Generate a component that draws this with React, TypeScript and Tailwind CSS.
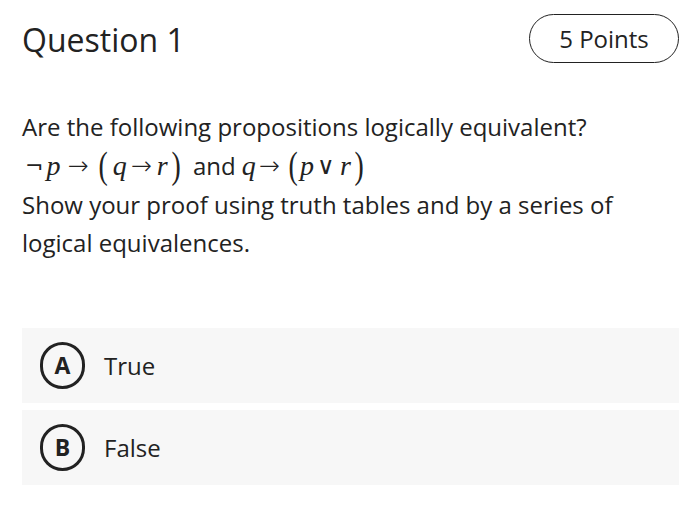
import React from "react";

function Option({ letter, label }: { letter: string; label: string }) {
  return (
    <div className="flex items-center h-[75px] bg-[#f7f7f7] pl-[18px]">
      <div className="w-[45px] h-[47px] rounded-full border-[3px] border-[#222] flex items-center justify-center text-[23px] font-bold text-[#222]">
        {letter}
      </div>
      <span className="ml-[19px] text-[24px] text-[#222]">{label}</span>
    </div>
  );
}

const it = "italic text-[28px] font-['Liberation_Serif',serif] shrink-0";
const arrow = "text-[25px] font-extralight font-['DejaVu_Sans',sans-serif] shrink-0";
const paren = "text-[37px] font-['Liberation_Serif',serif] shrink-0 inline-block scale-x-75";

export default function App() {
  return (
    <div className="w-[700px] h-[519px] bg-white text-[#222] px-[22px] font-['Open_Sans',sans-serif]">
      <div className="flex items-center justify-between pt-[14px]">
        <h1 className="text-[32px] leading-none mt-[2px]">Question 1</h1>
        <div className="w-[150px] h-[49px] mr-[-1px] rounded-full border-[1.5px] border-[#222] flex items-center justify-center text-[24px]">
          5 Points
        </div>
      </div>
      <div className="mt-[45px] text-[24px] leading-[38px]">
        <div>Are the following propositions logically equivalent?</div>
        <div className="flex items-center h-[40px] ml-[3px]">
          <span className="text-[22px] font-['DejaVu_Sans',sans-serif] shrink-0">¬</span>
          <span className={`${it} ml-[3px]`}>p</span>
          <span className={`${arrow} ml-[7px]`}>→</span>
          <span className={`${paren} ml-[9px]`}>(</span>
          <span className={`${it} ml-[3px]`}>q</span>
          <span className={`${arrow} ml-[4px]`}>→</span>
          <span className={`${it} ml-[5px]`}>r</span>
          <span className={`${paren} ml-[2px]`}>)</span>
          <span className="ml-[11px] shrink-0">and</span>
          <span className={`${it} ml-[6px]`}>q</span>
          <span className={`${arrow} ml-[3px]`}>→</span>
          <span className={`${paren} ml-[7px]`}>(</span>
          <span className={`${it} ml-[1px]`}>p</span>
          <span className="text-[24px] font-extralight font-['DejaVu_Sans',sans-serif] shrink-0 ml-[3px]">∨</span>
          <span className={`${it} ml-[5px]`}>r</span>
          <span className={`${paren} ml-[2px]`}>)</span>
        </div>
        <div>Show your proof using truth tables and by a series of</div>
        <div>logical equivalences.</div>
      </div>
      <div className="mt-[66px] flex flex-col gap-[7px] mr-[-1px]">
        <Option letter="A" label="True" />
        <Option letter="B" label="False" />
      </div>
    </div>
  );
}
